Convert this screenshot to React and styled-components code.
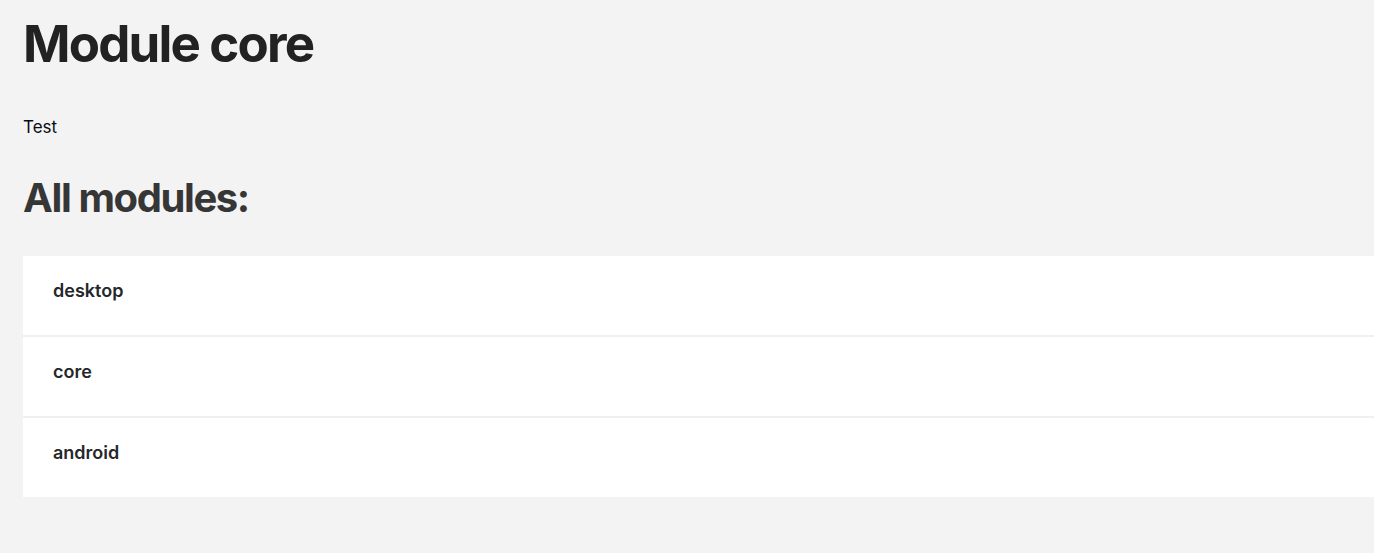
import styled, { createGlobalStyle } from "styled-components";

const GlobalStyle = createGlobalStyle`
  html, body {
    margin: 0;
    padding: 0;
    background: #f3f3f3;
  }
  body {
    font-family: Inter, "Noto Sans", sans-serif;
    overflow: hidden;
  }
`;

const Page = styled.main`
  padding: 14px 0 0 23px;
`;

const Title = styled.h1`
  margin: 0;
  font-size: 51px;
  line-height: 60px;
  font-weight: 700;
  color: #222;
  letter-spacing: -1.8px;
`;

const Text = styled.p`
  margin: 41px 0 0;
  font-size: 17px;
  line-height: 24px;
  color: #0a0a14;
`;

const SubTitle = styled.h2`
  margin: 35px 0 0;
  font-size: 40px;
  line-height: 48px;
  font-weight: 700;
  color: #363636;
  letter-spacing: -1.4px;
`;

const ModuleList = styled.ul`
  list-style: none;
  margin: 34px 0 0;
  padding: 0;
  display: flex;
  flex-direction: column;
  gap: 2px;
  background: #f0f0f0;
  width: calc(100% + 40px);
`;

const ModuleItem = styled.li`
  box-sizing: border-box;
  background: #fff;
  height: 79px;
  padding: 23px 30px 0;
  font-size: 18px;
  line-height: 24px;
  font-weight: 560;
  color: #26272b;
`;

const modules = ["desktop", "core", "android"];

function App() {
  return (
    <>
      <GlobalStyle />
      <Page>
        <Title>Module core</Title>
        <Text>Test</Text>
        <SubTitle>All modules:</SubTitle>
        <ModuleList>
          {modules.map((name) => (
            <ModuleItem key={name}>{name}</ModuleItem>
          ))}
        </ModuleList>
      </Page>
    </>
  );
}

export default App;
